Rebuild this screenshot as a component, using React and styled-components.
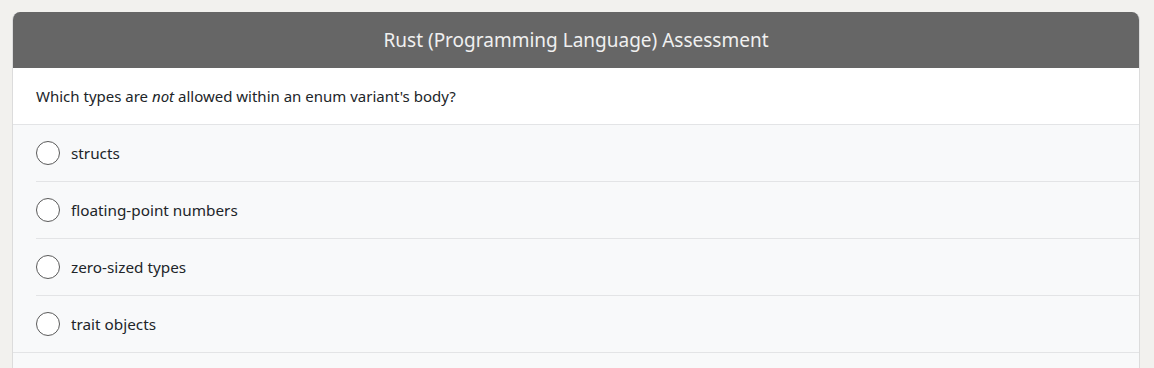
import styled, { createGlobalStyle } from "styled-components";

const GlobalStyle = createGlobalStyle`
  html, body {
    margin: 0;
    padding: 0;
    background: #f2f1ee;
  }
  body {
    font-family: "Noto Sans", "DejaVu Sans", sans-serif;
    color: #212529;
  }
`;

const options = ["structs", "floating-point numbers", "zero-sized types", "trait objects"];

const App = () => {
  return (
    <>
      <GlobalStyle />
      <Page>
        <Card>
          <Header>Rust (Programming Language) Assessment</Header>
          <Question>
            <span>
              Which types are <em>not</em> allowed within an enum variant's body?
            </span>
          </Question>
          <OptionList>
            {options.map((o) => (
              <OptionRow key={o}>
                <Radio type="radio" name="answer" />
                <OptionLabel>{o}</OptionLabel>
              </OptionRow>
            ))}
          </OptionList>
          <Footer />
        </Card>
      </Page>
    </>
  );
};

export default App;

const Page = styled.div`
  padding: 12px 14px 0 12px;
  height: 356px;
  overflow: hidden;
`;

const Card = styled.div`
  display: flex;
  flex-direction: column;
  background: #f8f9fa;
  border: 1px solid #dcdcdc;
  border-top: none;
  border-radius: 8px 8px 0 0;
  overflow: hidden;
  height: 400px;
`;

const Header = styled.div`
  display: flex;
  align-items: center;
  justify-content: center;
  height: 56px;
  background: #666666;
  color: #f0f0f0;
  font-size: 19px;
`;

const Question = styled.div`
  display: flex;
  align-items: center;
  height: 56px;
  padding: 0 23px;
  background: #ffffff;
  font-size: 15px;
  border-bottom: 1px solid #e3e4e6;

  em {
    font-style: italic;
  }
`;

const OptionList = styled.div`
  padding-left: 23px;
  border-bottom: 1px solid #e3e4e6;
`;

const OptionRow = styled.label`
  display: flex;
  align-items: center;
  gap: 11px;
  height: 56px;
  border-bottom: 1px solid #e3e4e6;
  font-size: 15.3px;

  &:last-child {
    border-bottom: none;
  }
`;

const Radio = styled.input`
  appearance: none;
  margin: 0;
  width: 24px;
  height: 24px;
  border: 1px solid #5a5a5a;
  border-radius: 50%;
  background: #fff;
`;

const OptionLabel = styled.span``;

const Footer = styled.div`
  flex: 1;
`;
